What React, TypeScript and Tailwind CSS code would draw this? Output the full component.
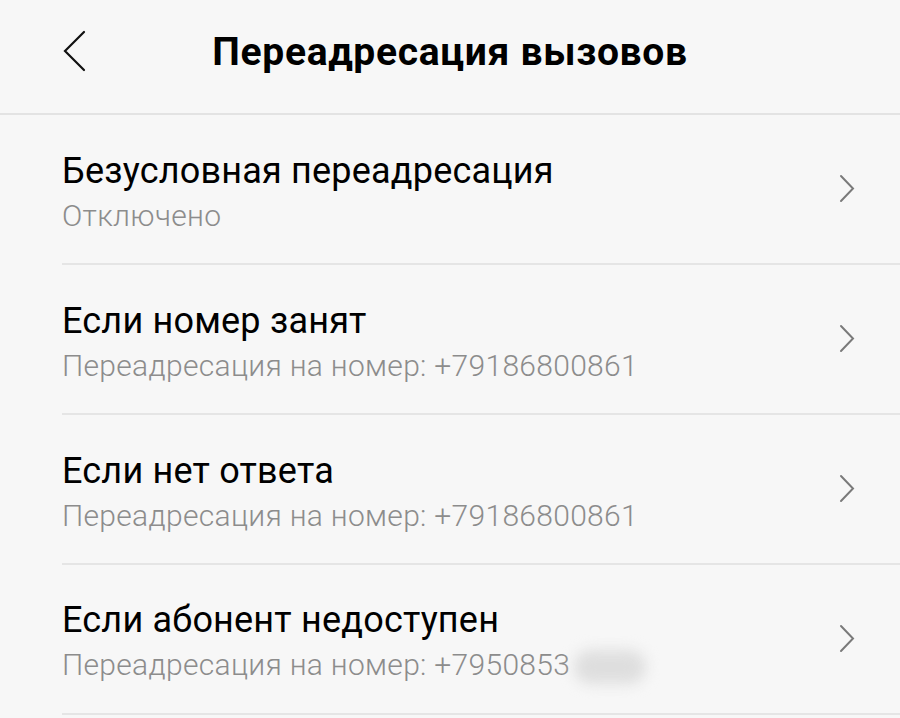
import React from "react";

const rows = [
  { title: "Безусловная переадресация", sub: "Отключено", blur: false },
  { title: "Если номер занят", sub: "Переадресация на номер: +79186800861", blur: false },
  { title: "Если нет ответа", sub: "Переадресация на номер: +79186800861", blur: false },
  { title: "Если абонент недоступен", sub: "Переадресация на номер: +7950853", blur: true },
];

function ChevronRight() {
  return (
    <svg width="20" height="32" viewBox="0 0 20 32" className="shrink-0">
      <polyline points="3,3 15,15.5 3,28" fill="none" stroke="#7a7a7a" strokeWidth="2" strokeLinecap="round" strokeLinejoin="miter" />
    </svg>
  );
}

export default function App() {
  return (
    <div className="w-[900px] h-[718px] overflow-hidden bg-[#f7f7f7] text-black" style={{ fontFamily: "Roboto, 'Noto Sans', sans-serif" }}>
      <div className="relative h-[115px] border-b-2 border-[#e3e3e3] flex justify-center pt-[29px]">
        <svg width="30" height="44" viewBox="0 0 30 44" className="absolute left-[59px] top-[29px]">
          <polyline points="25,3 6,22 25,41" fill="none" stroke="#111" strokeWidth="2.2" strokeLinecap="round" />
        </svg>
        <h1 className="text-[39px] leading-[46px] font-bold tracking-[0.7px]">Переадресация вызовов</h1>
      </div>
      {rows.map((r, i) => (
        <div key={i} className="h-[150px] ml-[62px] border-b-2 border-[#e5e5e5] flex items-center pr-[42px]">
          <div className="flex-1 pt-[4px]">
            <div className="text-[36px] leading-[44px] font-normal tracking-[0.2px]">{r.title}</div>
            <div className="relative mt-[5px] text-[30px] leading-[36px] font-light text-[#8c8c8c] tracking-[0.3px]">
              {r.sub}
              {r.blur && (
                <span className="inline-block align-middle ml-[4px] w-[72px] h-[34px] rounded-full bg-[#dedede] blur-[7px]" />
              )}
            </div>
          </div>
          <ChevronRight />
        </div>
      ))}
    </div>
  );
}
